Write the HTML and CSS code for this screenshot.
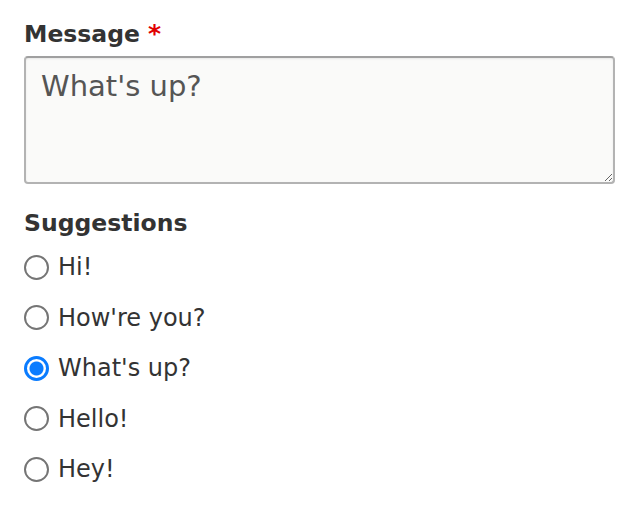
FILE: index.html
```html
<!DOCTYPE html>
<html>
<head>
<meta charset="utf-8">
<link rel="stylesheet" href="styles.css">
</head>
<body>
<form class="form">
  <div class="field">
    <label class="label" for="msg">Message <span class="req">*</span></label>
    <textarea id="msg" class="textarea">What's up?</textarea>
  </div>
  <fieldset class="group">
    <legend class="label">Suggestions</legend>
    <label class="option"><input type="radio" name="s" class="radio"><span>Hi!</span></label>
    <label class="option"><input type="radio" name="s" class="radio"><span>How're you?</span></label>
    <label class="option"><input type="radio" name="s" class="radio" checked><span>What's up?</span></label>
    <label class="option"><input type="radio" name="s" class="radio"><span>Hello!</span></label>
    <label class="option"><input type="radio" name="s" class="radio"><span>Hey!</span></label>
  </fieldset>
</form>
</body>
</html>
```
FILE: styles.css
```css
html, body {
  margin: 0;
  padding: 0;
  background: #ffffff;
}
body {
  font-family: "DejaVu Sans", sans-serif;
  color: #333333;
}
.form {
  padding: 17px 28px 0 24px;
}
.field {
  display: flex;
  flex-direction: column;
}
.label {
  display: block;
  font-weight: bold;
  font-size: 23.5px;
  line-height: 34px;
  color: #333333;
  padding: 0;
}
.req {
  color: #e00000;
  font-size: 25px;
}
.textarea {
  box-sizing: border-box;
  width: 591px;
  height: 128px;
  margin: 5px 0 0 0;
  border: 2px solid #b3b3b3;
  border-top-color: #a0a0a0;
  border-radius: 4px;
  background: #fafaf9;
  font-family: "DejaVu Sans", sans-serif;
  font-size: 29px;
  line-height: 40px;
  color: #555555;
  padding: 8px 15px;
  resize: vertical;
  box-shadow: inset 0 1px 2px rgba(0,0,0,0.08);
}
.group {
  border: 0;
  margin: 22px 0 0 0;
  padding: 0;
}
.group .label {
  margin-bottom: 2px;
}
.option {
  display: flex;
  align-items: center;
  height: 50.5px;
  font-size: 24px;
  color: #333333;
}
.option span {
  margin-left: 9px;
}
.radio {
  appearance: none;
  -webkit-appearance: none;
  box-sizing: border-box;
  width: 25px;
  height: 25px;
  margin: 0;
  border: 2px solid #757575;
  border-radius: 50%;
  background: #fff;
  flex: none;
}
.radio:checked {
  border: 3px solid #0a7cff;
  background: radial-gradient(circle, #0a7cff 0 6.5px, #ffffff 7.5px);
}
```
